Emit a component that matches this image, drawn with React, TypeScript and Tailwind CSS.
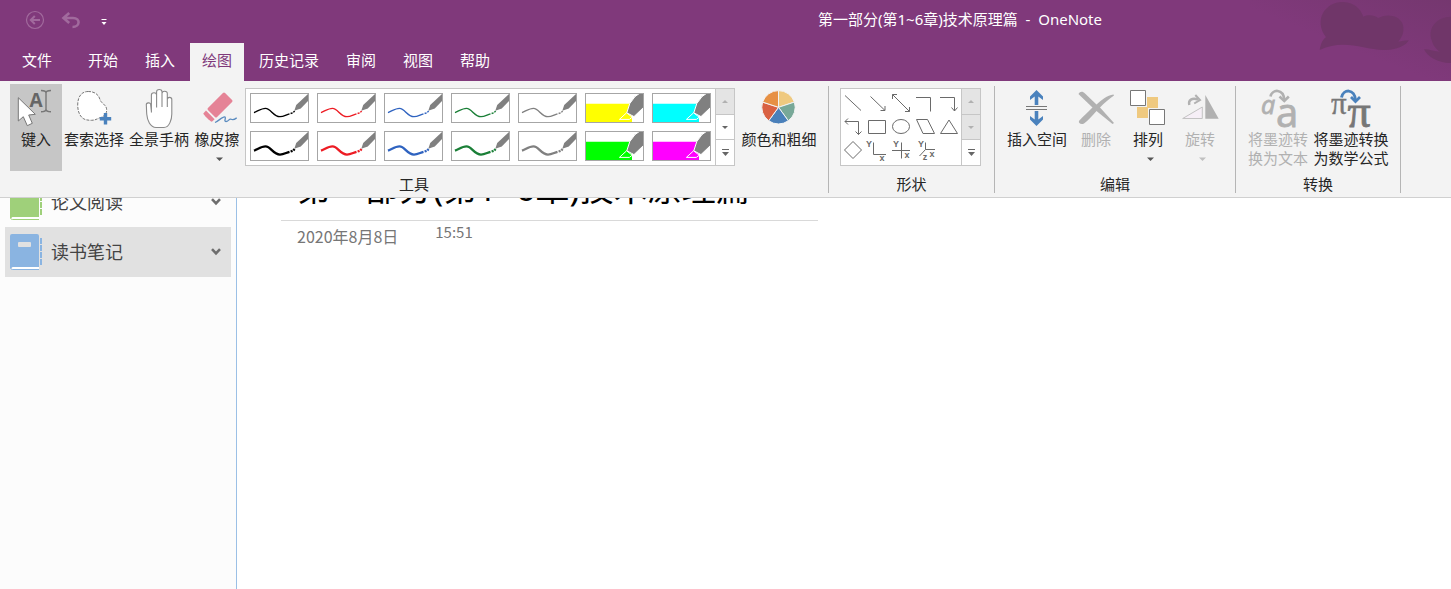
import { useState, type ReactNode } from 'react'
import clsx from 'clsx'

const TABS = ['文件', '开始', '插入', '绘图', '历史记录', '审阅', '视图', '帮助']

const PENS = [
  { name: '黑色', color: '#000000' },
  { name: '红色', color: '#ed1c24' },
  { name: '蓝色', color: '#2f63c0' },
  { name: '绿色', color: '#1a7f37' },
  { name: '灰色', color: '#808080' },
]

const HIGHLIGHTERS = [
  ['#ffff00', '#00ffff'],
  ['#00ff00', '#ff00ff'],
]

function PenPreview({ color, width }: { color: string; width: number }) {
  return (
    <svg viewBox="0 0 57 28" className="block h-[28px] w-[57px]" aria-hidden>
      <g fill="none" stroke={color} strokeWidth={width}>
        <path d="M3 18.6C7 17 10.5 14.4 14.5 14.4C20 14.4 22 22.6 29 22.6C32.5 22.6 35 20.8 38.5 19.8" />
        <path d="M39.6 19.5l2-.7M42.4 18.4l1.2-1.4" />
      </g>
      <path d="M43.3 16.8L45.2 11L57 0V7L49.8 14.4Z" fill="#808080" />
    </svg>
  )
}

function HighlighterPreview({ color }: { color: string }) {
  return (
    <svg viewBox="0 0 57 28" className="block h-[28px] w-[57px]" aria-hidden>
      <path d="M0 9.8H46V28H0Z" fill={color} />
      <path d="M40.8 18.8L43.8 9.5L49 2.6L54 -1H58V13L48 22.6Z" fill="#808080" stroke="#fff" strokeWidth="1" />
      <path d="M40.6 18.8L33.4 25.4H43.4L46.2 23.2Z" fill={color} stroke="#fff" strokeWidth="1" />
    </svg>
  )
}

function AxisLetter({ x, y, children }: { x: number; y: number; children: string }) {
  return (
    <text x={x} y={y + 3} textAnchor="middle" fontSize="9" fontWeight="bold" fill="#6a6a6a" stroke="none" fontFamily="Liberation Sans">
      {children}
    </text>
  )
}

const SHAPES: { name: string; art: ReactNode }[] = [
  { name: '直线', art: <path d="M4 4.5L20 19.5" /> },
  { name: '箭头', art: <path d="M5.5 5.5L20 19.5M20 15v4.5h-4.5" /> },
  { name: '双箭头', art: <path d="M3.5 3.5L20.5 20.5M3.5 8V3.5H8M20.5 16v4.5H16" /> },
  { name: '肘形', art: <path d="M3 6.5H17.5V20.5" /> },
  { name: '肘形箭头', art: <path d="M3 6.5H17.5V20M14.5 16.5l3 3.5l3-3.5" /> },
  { name: '肘形双箭头', art: <path d="M4 6.5H17.5V19.5M7 3.5L4 6.5l3 3M14.5 16.5l3 3l3-3" /> },
  { name: '矩形', art: <path d="M3.5 5.5H20.5V18.5H3.5Z" /> },
  { name: '椭圆', art: <ellipse cx="12" cy="11.5" rx="8.5" ry="7" /> },
  { name: '平行四边形', art: <path d="M3.5 4.5H14.5L21.5 18.5H10Z" /> },
  { name: '三角形', art: <path d="M12 5L3.5 18.5H20.5Z" /> },
  { name: '菱形', art: <path d="M12 2.5L20.5 11L12 19.5L3.5 11Z" /> },
  {
    name: '二维坐标轴',
    art: (
      <>
        <path d="M8.5 3.5V15.5H21" />
        <AxisLetter x={4} y={5}>Y</AxisLetter>
        <AxisLetter x={17} y={19}>x</AxisLetter>
      </>
    ),
  },
  {
    name: '十字坐标轴',
    art: (
      <>
        <path d="M12.5 3.5V19.5M3 11.5H21" />
        <AxisLetter x={7} y={5}>Y</AxisLetter>
        <AxisLetter x={18} y={16}>x</AxisLetter>
      </>
    ),
  },
  {
    name: '三维坐标轴',
    art: (
      <>
        <path d="M12.5 3.5V10.5H22M12.5 10.5L6.5 17" />
        <AxisLetter x={8} y={5}>Y</AxisLetter>
        <AxisLetter x={19} y={15}>x</AxisLetter>
        <AxisLetter x={12} y={18}>z</AxisLetter>
      </>
    ),
  },
]

function Icon({ children }: { children: ReactNode }) {
  return (
    <svg viewBox="0 0 40 42" className="h-[42px] w-[40px] shrink-0" fill="none" aria-hidden>
      {children}
    </svg>
  )
}

const typeIcon = (
  <Icon>
    <text x="13.5" y="18.5" fontSize="19" fontWeight="bold" fill="#666" fontFamily="Open Sans">A</text>
    <path d="M25 2.5C28 2.5 30 3 30 5C30 3 32 2.5 35 2.5M25 23.8C28 23.8 30 23.2 30 21.3C30 23.2 32 23.8 35 23.8M30 5V21.3" stroke="#777" strokeWidth="1.4" />
    <path d="M2.3 9.7V33L7.3 28.7L11.3 37.7L16.3 35.3L12.7 27L19.3 26.3Z" fill="#fff" stroke="#777" />
  </Icon>
)

const lassoIcon = (
  <Icon>
    <path
      d="M14.3 3.5C8 3.5 3.7 8 3.7 17C3.7 23 5.5 27.5 8.5 30C11 32 14 32.3 17.5 32.3C21 32.3 23 31 26 29.7C30 28.5 32.7 26 32.7 22C32.7 16.5 27 15.5 26 11.5C24.5 6 20 3.5 14.3 3.5Z"
      fill="#fff"
      stroke="#777"
      strokeDasharray="3 1.2"
    />
    <path d="M31.5 25V36.4M25.8 30.7H37.2" stroke="#4a82bd" strokeWidth="3.4" />
  </Icon>
)

const handIcon = (
  <Icon>
    <path
      d="M12.5 24.5L11.6 16C11.3 14.5 7.2 14.3 7.3 16.8C7.6 20 7.4 23 7.8 26.5C8.3 32 11 39.5 17 39.5H25C30.5 39.5 32.8 31 32.8 26V11.5C32.8 8.6 28.3 8.6 28.3 11.5V19V5.5C28.3 2.5 23 2.5 23 5.5V19V3.8C23 .7 17.6 .7 17.6 3.8V19.5V7C17.6 4 12.4 4 12.4 7V24.5"
      fill="#fff"
      stroke="#8a8a8a"
      strokeWidth="1.1"
    />
  </Icon>
)

const eraserIcon = (
  <Icon>
    <path d="M27 6L34 13L19 28L12 21Z" fill="#e58396" stroke="#e58396" strokeWidth="3" strokeLinejoin="round" />
    <path d="M9 22.5L17.6 31.3L15.2 33.6C14 34.5 6.5 27 6.3 25.5Z" fill="#e58396" />
    <path d="M18 34.5C21 33.5 26.5 27.5 28 29C29.3 30.5 26.5 33.3 29 33.5C31.5 33.6 32 30.5 34 31.2C35.5 32 37 32 39.7 29.8" stroke="#5a8bbf" strokeWidth="1.3" />
  </Icon>
)

const wheelIcon = (
  <Icon>
    <g stroke="#f3f3f3">
      <path d="M19.5 19.3V2.6A16.7 16.7 0 0 1 35.4 14.1Z" fill="#efc97f" />
      <path d="M19.5 19.3L35.4 14.1A16.7 16.7 0 0 1 29.3 32.8Z" fill="#78a898" />
      <path d="M19.5 19.3L29.3 32.8A16.7 16.7 0 0 1 9.7 32.8Z" fill="#4a80ba" />
      <path d="M19.5 19.3L9.7 32.8A16.7 16.7 0 0 1 3.6 14.1Z" fill="#d96142" />
      <path d="M19.5 19.3L3.6 14.1A16.7 16.7 0 0 1 19.5 2.6Z" fill="#e79044" />
    </g>
  </Icon>
)

const insertSpaceIcon = (
  <Icon>
    <path d="M19.5 2L26 8.5V12L21.3 8.5V17H17.7V8.5L13 12V8.5Z" fill="#4a82bd" />
    <path d="M19.5 38L26 31.5V28L21.3 31.5V23H17.7V31.5L13 28V31.5Z" fill="#4a82bd" />
    <path d="M9 18.5H30M9 21.5H30" stroke="#777" />
  </Icon>
)

const deleteIcon = (
  <Icon>
    <path
      d="M2.5 6C4 3.5 6.5 3 9 5.5L20.5 16.5C26 11.5 31 7.5 37.5 6.5L38 7.5C33 11 28 15 24 19.5L38 35L36.5 36L20.5 23C16 28 11.5 33 8 35.5C5 37 2 35 3 33C6.5 29 12 24 16.5 19.5L5 8.5Z"
      fill="#b1b1b1"
    />
  </Icon>
)

const arrangeIcon = (
  <Icon>
    <path d="M19 9H30V20H19ZM9 19H20V30H9Z" fill="#efc97f" />
    <path d="M2.5 2.5H17.5V17.5H2.5ZM21.5 21.5H36.5V36.5H21.5Z" fill="#fff" stroke="#777" />
  </Icon>
)

const rotateIcon = (
  <Icon>
    <path d="M9.3 17C8 12 12 9.5 18 11.5" stroke="#b1b1b1" strokeWidth="2.4" />
    <path d="M15.3 7L20 12L14.2 15.5" stroke="#b1b1b1" strokeWidth="2" />
    <path d="M2.7 30.5L22.3 19V30.5Z" fill="#f6eff7" stroke="#c3c3c3" />
    <path d="M25.3 7V30.8H38.7Z" fill="#b1b1b1" />
  </Icon>
)

const inkTextIcon = (
  <Icon>
    <text x="3" y="26" fontSize="25" fontStyle="italic" fontFamily="Open Sans" fill="#b1b1b1" stroke="#b1b1b1" strokeWidth=".8">a</text>
    <text x="18" y="39.2" fontSize="40" fontFamily="Open Sans" fill="#b1b1b1" stroke="#b1b1b1" strokeWidth=".9">a</text>
    <path d="M12.5 8.5C14 1 25.5 0 26.3 12" stroke="#b1b1b1" strokeWidth="2.6" />
    <path d="M21.5 8.5L26.3 13L30.8 8.5" stroke="#b1b1b1" strokeWidth="2.6" />
  </Icon>
)

const inkMathIcon = (
  <Icon>
    <text x="0" y="26.3" fontSize="31" fontFamily="Liberation Serif" fill="#777" stroke="#777" strokeWidth=".4">π</text>
    <text x="16.5" y="38.7" fontSize="46" fontFamily="Liberation Serif" fill="#777" stroke="#777" strokeWidth=".8">π</text>
    <path d="M10.5 9.5C12 1 24 0 24.5 12.5" stroke="#4a82bd" strokeWidth="3" />
    <path d="M20 9L24.5 13.5L29 9" stroke="#4a82bd" strokeWidth="2.8" />
  </Icon>
)

interface RibbonButtonProps {
  icon: ReactNode
  lines: string[]
  className: string
  active?: boolean
  disabled?: boolean
  menu?: boolean
  onClick?: () => void
}

function RibbonButton({ icon, lines, className, active, disabled, menu, onClick }: RibbonButtonProps) {
  return (
    <button
      type="button"
      disabled={disabled}
      aria-pressed={active}
      aria-haspopup={menu ? 'menu' : undefined}
      onClick={onClick}
      className={clsx(
        'flex h-[87px] shrink-0 flex-col items-center pt-1 leading-[19px] whitespace-nowrap',
        active && 'bg-[#c6c6c6]',
        disabled ? 'text-[#b1b1b1]' : 'text-[#262626]',
        className,
      )}
    >
      {icon}
      {lines.map((line) => (
        <span key={line}>{line}</span>
      ))}
      {menu && (
        <svg viewBox="0 0 7 4" className="mt-2 ml-1 h-1 w-[7px]" aria-hidden>
          <path d="M0 .5H7L3.5 4Z" fill={disabled ? '#c0c0c0' : '#555'} />
        </svg>
      )}
    </button>
  )
}

function Group({ label, className, children }: { label: string; className: string; children: ReactNode }) {
  return (
    <section aria-label={label} className="flex shrink-0 border-r border-[#b5b5b5]">
      <div className="flex flex-col">
        <div className={clsx('-mt-[2px] flex h-[87px]', className)}>{children}</div>
        <div className="mt-1 text-center leading-[18px] text-[#262626]">{label}</div>
      </div>
    </section>
  )
}

/** Up / down / more buttons on the right edge of a gallery. */
function GalleryScroller({ downDisabled }: { downDisabled?: boolean }) {
  return (
    <div className="flex w-[19px] flex-col border-l border-[#c6c6c6]">
      <button type="button" disabled aria-label="上一行" className="flex h-[25px] items-center justify-center bg-[#e4e4e4]">
        <svg viewBox="0 0 6 3" className="h-[3px] w-[6px]"><path d="M3 0L6 3H0Z" fill="#b1b1b1" /></svg>
      </button>
      <button
        type="button"
        disabled={downDisabled}
        aria-label="下一行"
        className={clsx('flex h-[26px] items-center justify-center border-y border-[#c6c6c6]', downDisabled ? 'bg-[#e4e4e4]' : 'bg-white')}
      >
        <svg viewBox="0 0 6 3" className="h-[3px] w-[6px]"><path d="M0 0H6L3 3Z" fill={downDisabled ? '#b1b1b1' : '#666'} /></svg>
      </button>
      <button type="button" aria-label="更多" className="flex flex-1 items-center justify-center bg-white">
        <svg viewBox="0 0 7 7" className="h-[7px] w-[7px]"><path d="M0 0H7V1H0ZM0 3H7L3.5 7Z" fill="#666" /></svg>
      </button>
    </div>
  )
}

function TitleBar() {
  return (
    <div className="flex h-[43px] items-center pb-[6px]">
      <div className="flex items-center pt-[2px] pl-[25px]">
        <button type="button" aria-label="后退" disabled>
          <svg viewBox="0 0 20 20" className="h-5 w-5" fill="none" stroke="#a16a9d" aria-hidden>
            <circle cx="10" cy="10" r="8.5" strokeWidth="1.2" />
            <path d="M15 10H6M9.8 6L5.8 10L9.8 14" strokeWidth="2" />
          </svg>
        </button>
        <button type="button" aria-label="撤消" disabled className="ml-4">
          <svg viewBox="0 0 20 20" className="h-5 w-5" fill="none" stroke="#a16a9d" aria-hidden>
            <path d="M2 8H12C20 8 19 17 11.5 17M8.2 3L2.5 8L8.2 13" strokeWidth="2.6" />
          </svg>
        </button>
        <button type="button" aria-label="自定义快速访问工具栏" className="ml-5 pt-1">
          <svg viewBox="0 0 6 6" className="h-[6px] w-[6px]" fill="#fff" aria-hidden>
            <path d="M.5 0H5.5V1H.5ZM.5 3H5.5L3 6Z" />
          </svg>
        </button>
      </div>
      <h1 className="mr-[349px] ml-auto leading-5 whitespace-pre">第一部分(第1~6章)技术原理篇  -  OneNote</h1>
    </div>
  )
}

function CloudArt() {
  return (
    <svg viewBox="0 0 603 243" className="pointer-events-none absolute top-0 right-0 h-[81px] w-[201px]" aria-hidden>
      <defs>
        <linearGradient id="shade" x1="0" y1="1" x2="1" y2="0">
          <stop offset="0.45" stopColor="#70366a" stopOpacity="0" />
          <stop offset="1" stopColor="#70366a" stopOpacity="0.7" />
        </linearGradient>
      </defs>
      <path d="M0 0H603V243H0Z" fill="url(#shade)" />
      <g fill="#703669">
        <path d="M209 150C213 130 218 118 228 112C190 60 225 5 280 6C315 8 332 28 340 50C355 42 375 46 385 54C415 38 455 48 460 80C462 100 455 112 445 125C455 124 465 121 476 121C470 135 440 152 400 150C340 148 280 115 209 150Z" />
        <path d="M603 50C560 50 532 85 545 120C548 135 560 150 570 155C555 155 540 148 522 148C532 170 565 190 603 189Z" />
      </g>
    </svg>
  )
}

function NotebookIcon({ color, paper }: { color: string; paper: string }) {
  return (
    <svg viewBox="0 0 32 36" className="h-9 w-8 shrink-0" aria-hidden>
      <path d="M2 0H27Q29 0 29 2V33H2.5L0 35V2Q0 0 2 0Z" fill={color} />
      <path d="M2.5 33H29V35H2Z" fill="#fff" />
      <path d="M1 34.5Q1 35.5 2.5 35.5H29" fill="none" stroke={color} />
      <rect x="8" y="8" width="13" height="5" rx="1" fill={paper} />
      <path d="M31 4V31" stroke={color} strokeWidth="2" strokeDasharray="6 1" />
    </svg>
  )
}

const NOTEBOOKS = [
  { name: '论文阅读', color: '#9fd07a', paper: '#ffffff' },
  { name: '读书笔记', color: '#8ab4e1', paper: '#e1e1e1' },
]

export default function App() {
  const [tab, setTab] = useState('绘图')
  const [tool, setTool] = useState('键入')
  const [notebook, setNotebook] = useState('读书笔记')

  return (
    <div className="flex h-screen flex-col overflow-hidden bg-white font-['Noto_Sans','Noto_Sans_CJK_SC',sans-serif] text-[15px]">
      <header className="relative shrink-0 bg-[#80397b] text-white">
        <CloudArt />
        <TitleBar />
        <nav role="tablist" className="flex h-[38px] gap-[3px] pl-[10px]">
          {TABS.map((name) => (
            <button
              key={name}
              type="button"
              role="tab"
              aria-selected={tab === name}
              onClick={() => setTab(name)}
              className={clsx('px-3 pb-[5px] leading-5 first:mr-[9px]', tab === name && 'bg-[#f3f3f3] text-[#80397b]')}
            >
              {name}
            </button>
          ))}
        </nav>
      </header>

      <div className="flex shrink-0 overflow-hidden border-b border-[#d0d0d0] bg-[#f3f3f3] pt-[5px] pb-1">
        <Group label="工具" className="pr-[7px] pl-[10px]">
          <RibbonButton icon={typeIcon} lines={['键入']} className="w-[52px]" active={tool === '键入'} onClick={() => setTool('键入')} />
          <RibbonButton icon={lassoIcon} lines={['套索选择']} className="w-[64px]" active={tool === '套索'} onClick={() => setTool('套索')} />
          <RibbonButton icon={handIcon} lines={['全景手柄']} className="w-[66px]" active={tool === '手柄'} onClick={() => setTool('手柄')} />
          <RibbonButton icon={eraserIcon} lines={['橡皮擦']} className="w-[50px]" menu />
          <div className="mt-1 ml-[3px] flex h-[78px] border border-[#c6c6c6] bg-white">
            <div className="grid grid-cols-7 gap-2 p-1">
              {HIGHLIGHTERS.map((row, i) => [
                ...PENS.map((pen) => (
                  <button key={pen.name + i} type="button" aria-label={`${pen.name}笔`} className="h-[30px] border border-[#a6a6a6]">
                    <PenPreview color={pen.color} width={i === 0 ? 1.4 : 2.3} />
                  </button>
                )),
                ...row.map((color) => (
                  <button key={color} type="button" aria-label="荧光笔" className="h-[30px] border border-[#a6a6a6]">
                    <HighlighterPreview color={color} />
                  </button>
                )),
              ])}
            </div>
            <GalleryScroller />
          </div>
          <RibbonButton icon={wheelIcon} lines={['颜色和粗细']} className="ml-[2px] w-[84px]" />
        </Group>

        <Group label="形状" className="pr-[13px] pl-[11px]">
          <div className="mt-1 flex h-[78px] border border-[#c6c6c6] bg-white">
            <div className="grid w-[120px] grid-cols-[repeat(5,24px)] content-start pt-[2px]">
              {SHAPES.map((shape) => (
                <button key={shape.name} type="button" aria-label={shape.name} className="h-6 w-6">
                  <svg viewBox="0 0 24 24" className="block h-6 w-6 overflow-visible" fill="none" stroke="#6a6a6a" aria-hidden>
                    {shape.art}
                  </svg>
                </button>
              ))}
            </div>
            <GalleryScroller downDisabled />
          </div>
        </Group>

        <Group label="编辑" className="pr-[10px] pl-2">
          <RibbonButton icon={insertSpaceIcon} lines={['插入空间']} className="w-[68px]" />
          <RibbonButton icon={deleteIcon} lines={['删除']} className="w-[50px]" disabled />
          <RibbonButton icon={arrangeIcon} lines={['排列']} className="w-[54px]" menu />
          <RibbonButton icon={rotateIcon} lines={['旋转']} className="w-[50px]" menu disabled />
        </Group>

        <Group label="转换" className="pr-2 pl-[10px]">
          <RibbonButton icon={inkTextIcon} lines={['将墨迹转', '换为文本']} className="w-[64px]" disabled />
          <RibbonButton icon={inkMathIcon} lines={['将墨迹转换', '为数学公式']} className="w-[82px]" />
        </Group>
      </div>

      <div className="flex min-h-0 flex-1 overflow-hidden">
        <aside className="w-[237px] shrink-0 border-r border-[#9bc0e6] bg-[#fcfcfc] px-[5px]">
          <ul className="-mt-[21px]">
            {NOTEBOOKS.map((book) => (
              <li key={book.name}>
                <button
                  type="button"
                  onClick={() => setNotebook(book.name)}
                  className={clsx(
                    'flex h-[50px] w-full items-center pr-[10px] pl-[5px] text-[18px] text-[#444]',
                    notebook === book.name && 'bg-[#e1e1e1]',
                  )}
                >
                  <NotebookIcon color={book.color} paper={book.paper} />
                  <span className="ml-[9px] leading-6">{book.name}</span>
                  <svg viewBox="0 0 10 8" className="ml-auto h-2 w-[10px]" fill="none" stroke="#6e6e6e" strokeWidth="2.6" aria-hidden>
                    <path d="M1 1.2L5 5.4L9 1.2" />
                  </svg>
                </button>
              </li>
            ))}
          </ul>
        </aside>

        <main className="min-w-0 flex-1 pl-11">
          <h2 className="-mt-7 w-[537px] border-b border-[#d9d9d9] pb-[14px] pl-4 text-[34px] leading-[36px] whitespace-nowrap text-black">
            第一部分(第1~6章)技术原理篇
          </h2>
          <div className="flex items-start gap-[37px] pl-4 font-['Noto_Sans_CJK_SC',sans-serif] text-[#767676]">
            <time className="mt-[5px] text-[16px] leading-5">2020年8月8日</time>
            <time className="mt-px leading-5">15:51</time>
          </div>
        </main>
      </div>
    </div>
  )
}
